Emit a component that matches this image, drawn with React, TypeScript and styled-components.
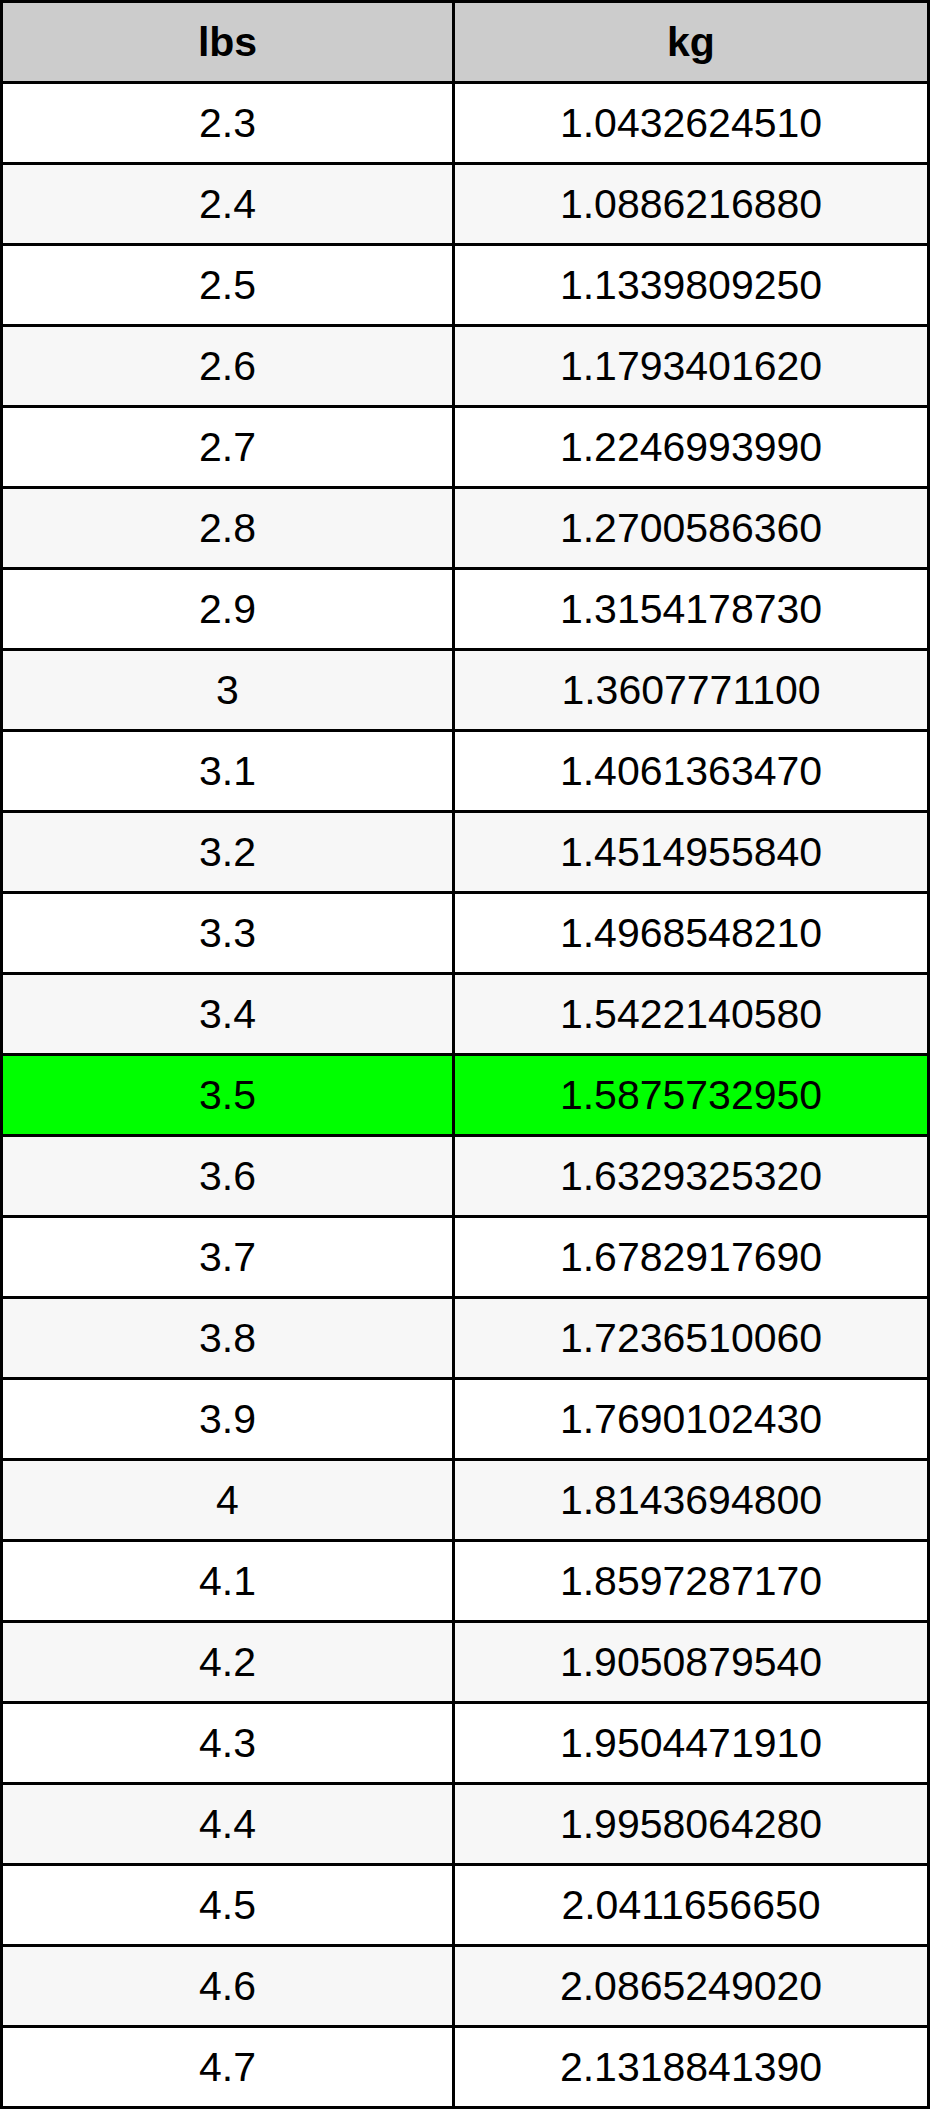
import React from "react";
import styled, { createGlobalStyle } from "styled-components";

const Global = createGlobalStyle`
  html, body {
    margin: 0;
    padding: 0;
    background: #ffffff;
  }
  body {
    font-family: "Liberation Sans", Arial, Helvetica, sans-serif;
  }
`;

const Table = styled.div`
  display: grid;
  grid-template-columns: 449px 472px;
  grid-auto-rows: 78px;
  gap: 3px;
  padding: 3px;
  width: 930px;
  box-sizing: border-box;
  background: #000000;
`;

const Cell = styled.div<{ $bg: string; $bold?: boolean }>`
  display: flex;
  align-items: center;
  justify-content: center;
  background: ${(p) => p.$bg};
  color: #000000;
  font-size: 41px;
  font-weight: ${(p) => (p.$bold ? 700 : 400)};
  line-height: 1;
`;

const rows: [string, string][] = [
  ["2.3", "1.0432624510"],
  ["2.4", "1.0886216880"],
  ["2.5", "1.1339809250"],
  ["2.6", "1.1793401620"],
  ["2.7", "1.2246993990"],
  ["2.8", "1.2700586360"],
  ["2.9", "1.3154178730"],
  ["3", "1.3607771100"],
  ["3.1", "1.4061363470"],
  ["3.2", "1.4514955840"],
  ["3.3", "1.4968548210"],
  ["3.4", "1.5422140580"],
  ["3.5", "1.5875732950"],
  ["3.6", "1.6329325320"],
  ["3.7", "1.6782917690"],
  ["3.8", "1.7236510060"],
  ["3.9", "1.7690102430"],
  ["4", "1.8143694800"],
  ["4.1", "1.8597287170"],
  ["4.2", "1.9050879540"],
  ["4.3", "1.9504471910"],
  ["4.4", "1.9958064280"],
  ["4.5", "2.0411656650"],
  ["4.6", "2.0865249020"],
  ["4.7", "2.1318841390"],
];

export default function App() {
  return (
    <>
      <Global />
      <Table>
        <Cell $bg="#cccccc" $bold>lbs</Cell>
        <Cell $bg="#cccccc" $bold>kg</Cell>
        {rows.map(([lbs, kg], i) => {
          const bg = lbs === "3.5" ? "#00ff00" : i % 2 === 0 ? "#ffffff" : "#f7f7f7";
          return (
            <React.Fragment key={lbs}>
              <Cell $bg={bg}>{lbs}</Cell>
              <Cell $bg={bg}>{kg}</Cell>
            </React.Fragment>
          );
        })}
      </Table>
    </>
  );
}
